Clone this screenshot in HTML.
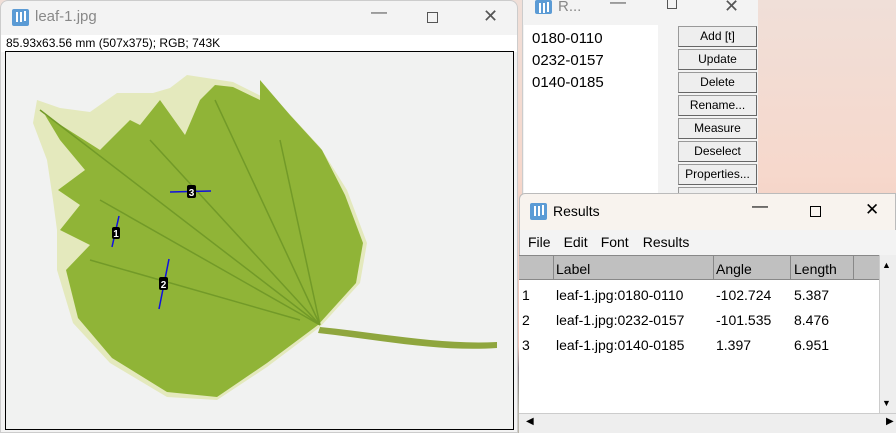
<!DOCTYPE html>
<html><head><meta charset="utf-8"><style>
*{margin:0;padding:0;box-sizing:border-box}
body{width:896px;height:433px;overflow:hidden;position:relative;font-family:"Liberation Sans",Arial,sans-serif;background:linear-gradient(180deg,#f0dfd8 0%,#f6d8cc 40%,#eec0b4 80%,#8a7e86 85%,#9a968e 90%,#b8b4a8 95%);}
.win{position:absolute;background:#f3f3f3}
.tb{position:absolute;font-size:15px;color:#888}
.ctl{position:absolute;color:#555;font-size:16px}
.btn{position:absolute;left:678px;width:79px;height:21px;background:#eeeeee;border:1px solid #999;border-right-color:#666;border-bottom-color:#666;font-size:12px;text-align:center;line-height:19px;color:#000}
.logo{position:absolute;width:17px;height:17px;background:#5b9bd5;border-radius:2px}
.logo:after{content:"";position:absolute;left:4px;top:3px;width:2px;height:10px;background:#fff;box-shadow:4px 0 #fff,8px -1px #fff}
</style></head><body>
<div class="win" style="left:0;top:0;width:518px;height:433px;background:#f3f3f3;border-radius:8px 8px 0 0;border:1px solid #ccc"></div>
<div class="logo" style="left:12px;top:9px"></div>
<div class="tb" style="left:35px;top:8px;font-size:15px">leaf-1.jpg</div>
<div class="ctl" style="left:371px;top:4px">—</div>
<div style="position:absolute;left:427px;top:12px;width:11px;height:11px;border:1px solid #555"></div>
<div class="ctl" style="left:483px;top:6px;font-size:18px">✕</div>
<div style="position:absolute;left:1px;top:35px;width:516px;height:17px;background:#fff"></div>
<div style="position:absolute;left:6px;top:36px;font-size:12px;color:#000">85.93x63.56 mm (507x375); RGB; 743K</div>
<div style="position:absolute;left:5px;top:51px;width:509px;height:379px;border:1px solid #000;background:#f1f2f1;overflow:hidden">
<svg width="507" height="377" viewBox="6 52 507 377" style="display:block">
<path d="M320,327 C380,333 440,345 497,342 L497,348 C440,352 380,340 318,333Z" fill="#8fa63e"/>
<path d="M37,100 L60,108 L90,112 L117,93 L153,93 L170,88 L187,75 L233,82 L283,107 L320,147 L347,190 L367,243 L360,283 L320,327 L267,367 L217,400 L167,397 L110,363 L73,323 L57,270 L57,230 L53,200 L47,160 L33,123Z" fill="#e4e9bd"/>
<path d="M45,115 L100,150 L130,120 L140,125 L160,100 L185,135 L200,100 L215,85 L233,87 L260,100 L260,80 L290,115 L322,150 L345,195 L363,243 L356,283 L318,325 L267,363 L217,397 L167,392 L112,358 L78,318 L66,270 L90,245 L60,230 L80,205 L58,190 L85,170 L60,140Z" fill="#90b437"/>
<path d="M40,110 L320,325 M90,260 L300,320 M150,140 L320,325 M215,100 L320,325 M280,140 L320,325 M100,200 L320,325" stroke="#729a28" stroke-width="1.5" fill="none"/>
<g stroke="#1010e0" stroke-width="1.5"><line x1="119" y1="216" x2="112" y2="247"/><line x1="169" y1="259" x2="159" y2="309"/><line x1="170" y1="192" x2="211" y2="191"/></g>
<g font-size="10" font-weight="bold" fill="#fff" text-anchor="middle"><rect x="112" y="227" width="8" height="12" rx="2" fill="#000"/><text x="116" y="237">1</text><rect x="159" y="277" width="9" height="13" rx="2" fill="#000"/><text x="163.5" y="288">2</text><rect x="187" y="185" width="9" height="13" rx="2" fill="#000"/><text x="191.5" y="196">3</text></g>
</svg></div>
<div class="win" style="left:522px;top:0;width:236px;height:195px;border-left:1px solid #ccc"></div>
<div class="logo" style="left:535px;top:0px;height:14px"></div>
<div class="tb" style="left:558px;top:-2px">R...</div>
<div class="ctl" style="left:610px;top:-6px">—</div>
<div style="position:absolute;left:667px;top:0;width:10px;height:9px;border:1px solid #555;border-top:none"></div>
<div class="ctl" style="left:724px;top:-4px;font-size:18px">✕</div>
<div style="position:absolute;left:524px;top:25px;width:140px;height:170px;background:#fff;border-right:6px solid #f3f3f3"></div>
<div style="position:absolute;left:532px;top:28px;font-size:15px;line-height:22px;color:#000">0180-0110<br>0232-0157<br>0140-0185</div>
<div class="btn" style="top:26px">Add [t]</div>
<div class="btn" style="top:49px">Update</div>
<div class="btn" style="top:72px">Delete</div>
<div class="btn" style="top:95px">Rename...</div>
<div class="btn" style="top:118px">Measure</div>
<div class="btn" style="top:141px">Deselect</div>
<div class="btn" style="top:164px">Properties...</div>
<div class="btn" style="top:187px"></div>
<div class="win" style="left:519px;top:193px;width:377px;height:240px;background:#f8f3ee;border:1px solid #bbb;border-radius:6px 0 0 0"></div>
<div class="logo" style="left:530px;top:203px"></div>
<div class="tb" style="left:553px;top:203px;color:#000;font-size:14px">Results</div>
<div class="ctl" style="left:752px;top:198px;color:#000">—</div>
<div style="position:absolute;left:810px;top:206px;width:11px;height:11px;border:1px solid #000"></div>
<div class="ctl" style="left:865px;top:200px;color:#000;font-size:17px">✕</div>
<div style="position:absolute;left:520px;top:230px;width:376px;height:25px;background:#f3f3f3"></div>
<div style="position:absolute;left:528px;top:234px;font-size:14px;color:#000"><span>File</span><span style="margin-left:13px">Edit</span><span style="margin-left:13px">Font</span><span style="margin-left:14px">Results</span></div>
<div style="position:absolute;left:519px;top:255px;width:360px;height:158px;background:#fff"></div>
<div style="position:absolute;left:519px;top:255px;width:360px;height:25px;background:#c0c0c0;border-top:1px solid #888;border-bottom:1px solid #888"></div>
<div style="position:absolute;left:553px;top:255px;width:1px;height:25px;background:#888"></div>
<div style="position:absolute;left:713px;top:255px;width:1px;height:25px;background:#888"></div>
<div style="position:absolute;left:790px;top:255px;width:1px;height:25px;background:#888"></div>
<div style="position:absolute;left:853px;top:255px;width:1px;height:25px;background:#888"></div>
<div style="position:absolute;left:556px;top:261px;font-size:14px">Label</div>
<div style="position:absolute;left:716px;top:261px;font-size:14px">Angle</div>
<div style="position:absolute;left:794px;top:261px;font-size:14px">Length</div>
<div style="position:absolute;left:522px;top:283px;font-size:14px;line-height:25px">1<br>2<br>3</div>
<div style="position:absolute;left:556px;top:283px;font-size:14px;line-height:25px">leaf-1.jpg:0180-0110<br>leaf-1.jpg:0232-0157<br>leaf-1.jpg:0140-0185</div>
<div style="position:absolute;left:716px;top:283px;font-size:14px;line-height:25px">-102.724<br>-101.535<br>1.397</div>
<div style="position:absolute;left:794px;top:283px;font-size:14px;line-height:25px">5.387<br>8.476<br>6.951</div>
<div style="position:absolute;left:879px;top:255px;width:17px;height:158px;background:#eee;border-left:1px solid #ccc"></div>
<div style="position:absolute;left:882px;top:260px;font-size:9px">▲</div>
<div style="position:absolute;left:882px;top:398px;font-size:9px">▼</div>
<div style="position:absolute;left:519px;top:413px;width:377px;height:20px;background:#eee;border-top:1px solid #ccc"></div>
<div style="position:absolute;left:526px;top:416px;font-size:10px">◀</div>
<div style="position:absolute;left:886px;top:416px;font-size:10px">▶</div>
</body></html>
